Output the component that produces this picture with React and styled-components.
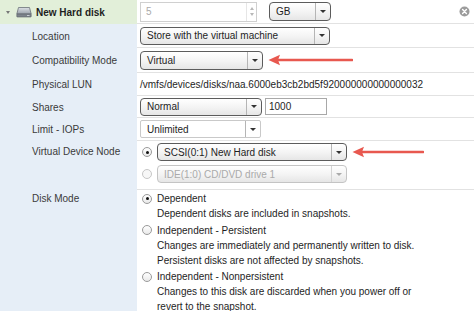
import React from 'react';
import styled, { createGlobalStyle } from 'styled-components';

const GlobalStyle = createGlobalStyle`
  html, body { margin: 0; padding: 0; background: #fff; }
  body {
    font-family: 'Liberation Sans', Arial, Helvetica, sans-serif;
    font-size: 10px;
    color: #333;
  }
`;

const Sheet = styled.div`
  width: 474px;
  height: 311px;
  overflow: hidden;
  display: flex;
  flex-direction: column;
`;

const Row = styled.div`
  display: grid;
  grid-template-columns: 137px 1fr;
  height: ${(p) => p.$h}px;
  flex: ${(p) => (p.$grow ? '1 1 auto' : '0 0 auto')};
`;

const Label = styled.div`
  background: ${(p) => (p.$head ? '#e2efd9' : '#e6eef7')};
  padding-left: ${(p) => (p.$head ? 6 : 32)}px;
  padding-top: ${(p) => p.$pt || 0}px;
  display: flex;
  align-items: ${(p) => (p.$top ? 'flex-start' : 'center')};
  gap: 4px;
  color: ${(p) => (p.$head ? '#1e1e1e' : '#3a3a3a')};
  font-weight: ${(p) => (p.$head ? 'bold' : 'normal')};
  line-height: 15px;
`;

const Value = styled.div`
  border-bottom: ${(p) => (p.$last ? 'none' : '1px solid #e2e2e2')};
  padding-left: 3px;
  display: flex;
  flex-direction: ${(p) => (p.$col ? 'column' : 'row')};
  align-items: ${(p) => (p.$col ? 'flex-start' : 'center')};
  padding-top: ${(p) => p.$pt || 0}px;
  gap: ${(p) => p.$gap || 0}px;
  color: #1e1e1e;
`;

const Caret = styled.span`
  width: 0;
  height: 0;
  border-left: 3px solid transparent;
  border-right: 3px solid transparent;
  border-top: 3px solid ${(p) => p.$color || '#333'};
`;

const SelectBox = styled.div`
  width: ${(p) => p.$w}px;
  height: ${(p) => p.$hgt || 18}px;
  box-sizing: border-box;
  display: flex;
  align-items: stretch;
  border: 1px solid ${(p) => (p.$disabled ? '#c4c4c4' : p.$flat ? '#c9c9c9' : '#5c5c5c')};
  border-radius: ${(p) => (p.$flat ? 2 : 4)}px;
  background: ${(p) =>
    p.$flat ? '#fff' : 'linear-gradient(#ffffff, #f3f3f3 55%, #e6e6e6)'};
  color: ${(p) => (p.$disabled ? '#aaa' : '#1e1e1e')};
  flex: 0 0 auto;
`;

const SelectText = styled.span`
  flex: 1;
  padding-left: 6px;
  display: flex;
  align-items: center;
  white-space: nowrap;
  overflow: hidden;
`;

const SelectButton = styled.span`
  width: 14px;
  border-left: 1px solid ${(p) => (p.$disabled ? '#d4d4d4' : '#b5b5b5')};
  display: flex;
  align-items: center;
  justify-content: center;
`;

const Select = ({ w, h, flat, disabled, children }) => (
  <SelectBox $w={w} $hgt={h} $flat={flat} $disabled={disabled}>
    <SelectText>{children}</SelectText>
    <SelectButton $disabled={disabled}>
      <Caret $color={disabled ? '#aaa' : '#333'} />
    </SelectButton>
  </SelectBox>
);

const TextField = styled.div`
  width: ${(p) => p.$w}px;
  height: ${(p) => p.$hgt}px;
  box-sizing: border-box;
  border: 1px solid ${(p) => (p.$disabled ? '#d0d0d0' : '#a8a8a8')};
  background: #fff;
  color: ${(p) => (p.$disabled ? '#aaa' : '#1e1e1e')};
  display: flex;
  align-items: center;
  padding-left: ${(p) => (p.$disabled ? 5 : 3)}px;
  flex: 0 0 auto;
`;

const SpinText = styled.span`
  flex: 1;
`;

const Spinner = styled.span`
  width: 9px;
  align-self: stretch;
  display: flex;
  flex-direction: column;
  justify-content: center;
  align-items: center;
  gap: 3px;
  border-left: 1px solid #e6e6e6;
`;

const SpinUp = styled.span`
  width: 0;
  height: 0;
  border-left: 2.5px solid transparent;
  border-right: 2.5px solid transparent;
  border-bottom: 3px solid #b8b8b8;
`;

const SpinDown = styled(SpinUp)`
  border-bottom: none;
  border-top: 3px solid #b8b8b8;
`;

const Radio = styled.span`
  width: 10px;
  height: 10px;
  box-sizing: border-box;
  border-radius: 50%;
  border: 1px solid ${(p) => (p.$disabled ? '#c6c6c6' : '#9a9a9a')};
  background: ${(p) => (p.$disabled ? '#f7f7f7' : 'linear-gradient(#ffffff, #e9e9e9)')};
  display: flex;
  align-items: center;
  justify-content: center;
  flex: 0 0 auto;
  &::after {
    content: '';
    width: 3px;
    height: 3px;
    border-radius: 50%;
    background: ${(p) => (p.$checked ? '#111' : 'transparent')};
  }
`;

const NodeLine = styled.div`
  display: flex;
  align-items: center;
  gap: 5px;
  padding-left: 2px;
`;

const OptionList = styled.div`
  display: flex;
  flex-direction: column;
  gap: 1.5px;
  padding-left: 2px;
`;

const Option = styled.div`
  display: grid;
  grid-template-columns: 15px 1fr;
  line-height: 15px;
  color: #1e1e1e;
`;

const OptionRadio = styled.div`
  height: 15px;
  display: flex;
  align-items: center;
`;

const OptionText = styled.div`
  display: flex;
  flex-direction: column;
`;

const Plain = styled.span`
  color: #1e1e1e;
  white-space: nowrap;
`;

const Spacer = styled.span`
  flex: 1;
`;

const Expander = styled.span`
  width: 0;
  height: 0;
  border-left: 2.5px solid transparent;
  border-right: 2.5px solid transparent;
  border-top: 3px solid #777;
  margin-right: 2px;
`;

const DiskIcon = () => (
  <svg width="16" height="12" viewBox="0 0 16 12">
    <defs>
      <linearGradient id="dtop" x1="0" y1="0" x2="0" y2="1">
        <stop offset="0" stopColor="#dde1e6" />
        <stop offset="1" stopColor="#9aa2ab" />
      </linearGradient>
    </defs>
    <path d="M2.5 1.5 H13.5 L15.2 8 H0.8 Z" fill="url(#dtop)" stroke="#6b7178" strokeWidth="0.8" />
    <rect x="0.8" y="8" width="14.4" height="3" rx="0.6" fill="#7d848c" stroke="#5a5f66" strokeWidth="0.6" />
    <rect x="11" y="9" width="2.5" height="1" fill="#c9ced4" />
  </svg>
);

const CloseIcon = () => (
  <svg width="11" height="11" viewBox="0 0 11 11" style={{ marginRight: 4 }}>
    <circle cx="5.5" cy="5.5" r="5" fill="#9c9c9c" />
    <path d="M3.6 3.6 L7.4 7.4 M7.4 3.6 L3.6 7.4" stroke="#fff" strokeWidth="1.4" strokeLinecap="round" />
  </svg>
);

const RedArrow = ({ w }) => (
  <svg width={w} height="12" viewBox={`0 0 ${w} 12`}>
    <path d={`M10 6 H${w - 1}`} stroke="#e8584f" strokeWidth="2.6" strokeLinecap="round" />
    <path d="M0.5 6 L12 0.8 L10 6 L12 11.2 Z" fill="#e8584f" />
  </svg>
);

const App = () => (
  <>
    <GlobalStyle />
    <Sheet>
      <Row $h={24}>
        <Label $head>
          <Expander />
          <DiskIcon />
          <span>New Hard disk</span>
        </Label>
        <Value>
          <TextField $w={117} $hgt={20} $disabled>
            <SpinText>5</SpinText>
            <Spinner>
              <SpinUp />
              <SpinDown />
            </Spinner>
          </TextField>
          <span style={{ width: 12 }} />
          <Select w={62} h={19}>GB</Select>
          <Spacer />
          <CloseIcon />
        </Value>
      </Row>

      <Row $h={24}>
        <Label>Location</Label>
        <Value>
          <Select w={190}>Store with the virtual machine</Select>
        </Value>
      </Row>

      <Row $h={25}>
        <Label>Compatibility Mode</Label>
        <Value $gap={5}>
          <Select w={123} h={19}>Virtual</Select>
          <RedArrow w={85} />
        </Value>
      </Row>

      <Row $h={23}>
        <Label>Physical LUN</Label>
        <Value>
          <Plain>/vmfs/devices/disks/naa.6000eb3cb2bd5f920000000000000032</Plain>
        </Value>
      </Row>

      <Row $h={22}>
        <Label>Shares</Label>
        <Value $gap={3}>
          <Select w={122}>Normal</Select>
          <TextField $w={62} $hgt={17}>1000</TextField>
        </Value>
      </Row>

      <Row $h={23}>
        <Label>Limit - IOPs</Label>
        <Value>
          <Select w={121} flat>Unlimited</Select>
        </Value>
      </Row>

      <Row $h={49}>
        <Label $top $pt={3}>Virtual Device Node</Label>
        <Value $col $pt={2} $gap={4}>
          <NodeLine>
            <Radio $checked />
            <Select w={190} h={18}>SCSI(0:1) New Hard disk</Select>
            <RedArrow w={72} />
          </NodeLine>
          <NodeLine>
            <Radio $disabled />
            <Select w={190} h={18} disabled>IDE(1:0) CD/DVD drive 1</Select>
          </NodeLine>
        </Value>
      </Row>

      <Row $grow>
        <Label $top $pt={1}>Disk Mode</Label>
        <Value $col $pt={1} $last>
          <OptionList>
            <Option>
              <OptionRadio><Radio $checked /></OptionRadio>
              <OptionText>
                <span>Dependent</span>
                <span>Dependent disks are included in snapshots.</span>
              </OptionText>
            </Option>
            <Option>
              <OptionRadio><Radio /></OptionRadio>
              <OptionText>
                <span>Independent - Persistent</span>
                <span>Changes are immediately and permanently written to disk.</span>
                <span>Persistent disks are not affected by snapshots.</span>
              </OptionText>
            </Option>
            <Option>
              <OptionRadio><Radio /></OptionRadio>
              <OptionText>
                <span>Independent - Nonpersistent</span>
                <span>Changes to this disk are discarded when you power off or</span>
                <span>revert to the snapshot.</span>
              </OptionText>
            </Option>
          </OptionList>
        </Value>
      </Row>
    </Sheet>
  </>
);

export default App;
